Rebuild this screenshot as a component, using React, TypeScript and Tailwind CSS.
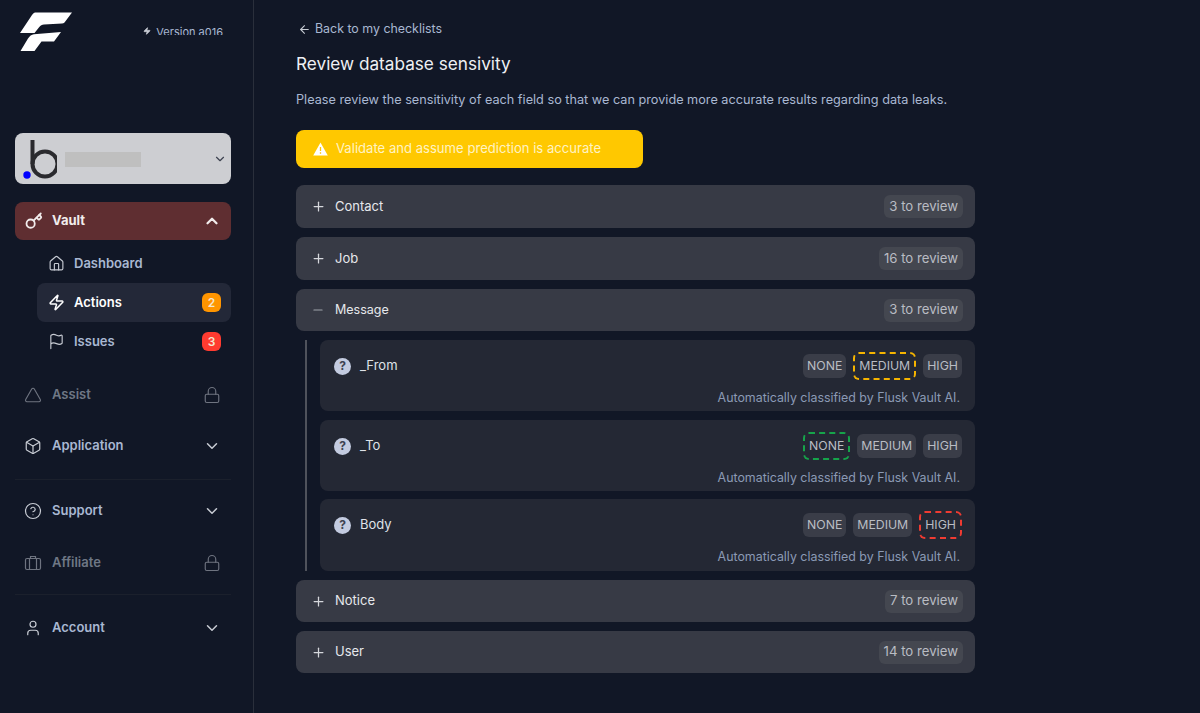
import React from 'react';
import {
  ArrowLeft,
  Box,
  ChevronDown,
  ChevronUp,
  CircleHelp,
  Flag,
  House,
  Key,
  Lock,
  Minus,
  Plus,
  Triangle,
  User,
  Zap,
} from 'lucide-react';

const font = { fontFamily: '"Inter", "Noto Sans", sans-serif' };

const NavRow = ({ icon, label, right, dim }: { icon: React.ReactNode; label: string; right: React.ReactNode; dim?: boolean }) => (
  <div className={`flex h-[38px] items-center pl-[9px] pr-[10px] ${dim ? 'text-[#6f7785]' : 'text-[#a9b8d2]'}`}>
    <div className={`w-[18px] ${dim ? 'text-[#6f7480]' : 'text-[#c8ccd4]'}`}>{icon}</div>
    <span className="ml-[10px] flex-1 text-[13px] font-semibold">{label}</span>
    {right}
  </div>
);

const Chevron = () => <ChevronDown size={18} className="text-[#c8ccd4]" />;
const Padlock = () => <Lock size={18} className="text-[#6f7480]" strokeWidth={1.5} />;

const SubRow = ({ icon, label, badge, badgeColor, active }: { icon: React.ReactNode; label: string; badge?: string; badgeColor?: string; active?: boolean }) => (
  <div className={`ml-[22px] flex h-[39px] items-center rounded-lg pl-[11px] pr-[10px] ${active ? 'bg-[#232838] text-white' : 'text-[#a9b8d2]'}`}>
    <div className="w-[16px]">{icon}</div>
    <span className="ml-[10px] flex-1 text-[13px] font-semibold">{label}</span>
    {badge && (
      <span className={`flex h-[19px] w-[19px] items-center justify-center rounded-md text-[12px] font-semibold text-[#f4e6d0] ${badgeColor}`}>
        {badge}
      </span>
    )}
  </div>
);

const Sidebar = () => (
  <aside className="flex h-[713px] w-[254px] shrink-0 flex-col border-r border-[#2a2f3b] pl-[15px] pr-[22px]">
    <div className="flex h-[133px] items-start justify-between">
      <svg width="52" height="40" viewBox="0 0 52 40" className="ml-[5px] mt-[12px]" fill="#ffffff">
        <path d="M15 0.5H52L44.5 10.5C43.8 11.2 43 11.5 42 11.5L24 12.5C22 12.6 20.5 13.5 19.3 15L14.5 21H0L11 4.5C12 2.8 13.5 0.8 15 0.5Z" />
        <path d="M41 20L34 29.5H21.5L14.5 39H0.5L8 26.5C9.5 24 11.5 22.6 14 22.2L41 20Z" />
      </svg>
      <div className="mr-[8px] mt-[26px] flex h-[9px] items-start overflow-hidden text-[#a9b8d2]">
        <Zap size={8} fill="#c8ccd4" className="mr-[5px] mt-[1px] text-[#c8ccd4]" />
        <span className="text-[11px] leading-[12px]">Version a016</span>
      </div>
    </div>

    <div className="flex h-[51px] items-center rounded-lg bg-[#cdced2] pr-[4px]">
      <svg width="42" height="51" viewBox="0 0 42 51">
        <circle cx="12" cy="42" r="3.7" fill="#0000ff" />
        <path d="M17.5 7V31" stroke="#2a2a2e" strokeWidth="4" fill="none" />
        <circle cx="30" cy="31" r="12.5" stroke="#2a2a2e" strokeWidth="4" fill="none" />
      </svg>
      <div className="ml-[8px] mt-[2px] h-[15px] w-[76px] bg-[#bfbfbf]" />
      <div className="flex-1" />
      <ChevronDown size={14} className="text-[#3d4250]" />
    </div>

    <div className="mt-[18px] flex h-[38px] items-center rounded-lg bg-[#5f2e31] pl-[10px] pr-[10px] text-[#f1ecec]">
      <Key size={18} strokeWidth={2.4} />
      <span className="ml-[9px] flex-1 text-[13px] font-bold">Vault</span>
      <ChevronUp size={18} strokeWidth={3} />
    </div>

    <div className="mt-[4px]">
      <SubRow icon={<House size={17} className="text-[#c8ccd4]" strokeWidth={1.6} />} label="Dashboard" />
      <SubRow icon={<Zap size={17} className="text-white" strokeWidth={2.2} />} label="Actions" badge="2" badgeColor="bg-[#ff9500]" active />
      <SubRow icon={<Flag size={17} className="text-[#c8ccd4]" strokeWidth={1.6} />} label="Issues" badge="3" badgeColor="bg-[#ff3b30]" />
    </div>

    <div className="mt-[15px]">
      <NavRow dim icon={<Triangle size={18} strokeWidth={1.5} />} label="Assist" right={<Padlock />} />
    </div>
    <div className="mt-[13px]">
      <NavRow icon={<Box size={18} strokeWidth={1.6} />} label="Application" right={<Chevron />} />
    </div>
    <div className="mt-[14px] border-t border-[#1b202c]" />
    <div className="mt-[12px]">
      <NavRow icon={<CircleHelp size={18} strokeWidth={1.6} />} label="Support" right={<Chevron />} />
    </div>
    <div className="mt-[14px]">
      <NavRow
        dim
        icon={
          <svg width="18" height="18" viewBox="0 0 18 18" fill="none" stroke="currentColor" strokeWidth="1.2">
            <rect x="1.5" y="4.5" width="15" height="11" rx="1.5" />
            <path d="M5.5 4.5V15.5M12.5 4.5V15.5M6.5 4.5V2.5H11.5V4.5" />
          </svg>
        }
        label="Affiliate"
        right={<Padlock />}
      />
    </div>
    <div className="mt-[12px] border-t border-[#1b202c]" />
    <div className="mt-[14px]">
      <NavRow icon={<User size={18} strokeWidth={1.6} />} label="Account" right={<Chevron />} />
    </div>
  </aside>
);

const Group = ({ open, name, count, className }: { open?: boolean; name: string; count: string; className?: string }) => (
  <div className={`flex items-center rounded-lg bg-[#373a45] pl-[15px] pr-[12px] ${className ?? 'h-[43px]'}`}>
    {open ? <Minus size={14} className="text-[#a0a3ab]" /> : <Plus size={15} className="text-[#d5d7dc]" />}
    <span className={`flex-1 text-[#e6e8ec] ${open ? 'ml-[10px] text-[12.5px]' : 'ml-[9px] text-[13px]'}`}>{name}</span>
    <span className="flex h-[23px] items-center rounded-md bg-[#444750] px-[5px] text-[13.2px] text-[#b9bcc3]">{count} to review</span>
  </div>
);

const Level = ({ label, tone }: { label: string; tone?: string }) => (
  <span
    className={`flex items-center rounded-md text-[12.3px] text-[#b9bcc3] ${
      tone ? `h-[28px] border-2 border-dashed px-[4px] ${tone}` : 'h-[24px] bg-[#3a3d48] px-[4px]'
    }`}
  >
    {label}
  </span>
);

const Field = ({ name, active, className }: { name: string; active: string; className?: string }) => {
  const tones: Record<string, string> = {
    NONE: 'border-[#16a34a]',
    MEDIUM: 'border-[#f5b400]',
    HIGH: 'border-[#ef3b32]',
  };
  return (
    <div className={`rounded-lg bg-[#242834] pl-[14px] pr-[13px] pt-[12px] ${className ?? 'h-[71px]'}`}>
      <div className="flex h-[28px] items-center">
        <div className="flex h-[17px] w-[17px] items-center justify-center rounded-full bg-[#c3cbe0] text-[12px] font-bold text-[#3d4250]">?</div>
        <span className="ml-[9px] flex-1 text-[13px] text-[#dfe2e8]">{name}</span>
        <div className="flex items-center gap-[7px]">
          {['NONE', 'MEDIUM', 'HIGH'].map(l => (
            <Level key={l} label={l} tone={l === active ? tones[l] : undefined} />
          ))}
        </div>
      </div>
      <p className="mt-[9px] pr-[2px] text-right text-[12.4px] leading-[18px] text-[#8b9ab5]">Automatically classified by Flusk Vault AI.</p>
    </div>
  );
};

export default function App() {
  return (
    <div className="flex h-[713px] w-[1200px] overflow-hidden bg-[#111726]" style={font}>
      <Sidebar />
      <main className="box-content w-[679px] pl-[42px] pt-[20px]">
        <div className="flex h-[18px] items-center pl-[2px] text-[12.4px] text-[#a9b8d2]">
          <ArrowLeft size={13} className="mr-[4px] text-[#c8ccd4]" />
          Back to my checklists
        </div>
        <h1 className="mt-[13px] text-[17.2px] leading-[26px] text-[#eef0f4]">Review database sensivity</h1>
        <p className="mt-[14px] text-[12.7px] leading-[18px] text-[#a9b8d2]">
          Please review the sensitivity of each field so that we can provide more accurate results regarding data leaks.
        </p>
        <div className="mt-[21px] flex h-[38px] w-[347px] items-center rounded-lg bg-[#ffc800] pl-[17px] text-[13.1px] text-[#fff3c4]">
          <svg width="15" height="14" viewBox="0 0 15 14" className="mr-[8px]">
            <path d="M7.5 0.5L14.8 13.5H0.2L7.5 0.5Z" fill="#ffffff" />
            <path d="M7.5 5V9M7.5 10.3V11.8" stroke="#ffc800" strokeWidth="1.3" />
          </svg>
          Validate and assume prediction is accurate
        </div>

        <div className="mt-[17px] flex flex-col gap-[9px]">
          <Group name="Contact" count="3" />
          <Group name="Job" count="16" />
          <Group open name="Message" count="3" className="h-[42px]" />
          <div className="ml-[9px] flex border-l-2 border-[#4f525b] pl-[13px]">
            <div className="flex flex-1 flex-col">
              <Field name="_From" active="MEDIUM" />
              <Field name="_To" active="NONE" className="mt-[9px] h-[71px]" />
              <Field name="Body" active="HIGH" className="mt-[8px] h-[72px]" />
            </div>
          </div>
          <Group name="Notice" count="7" className="h-[42px]" />
          <Group name="User" count="14" className="h-[42px]" />
        </div>
      </main>
    </div>
  );
}
